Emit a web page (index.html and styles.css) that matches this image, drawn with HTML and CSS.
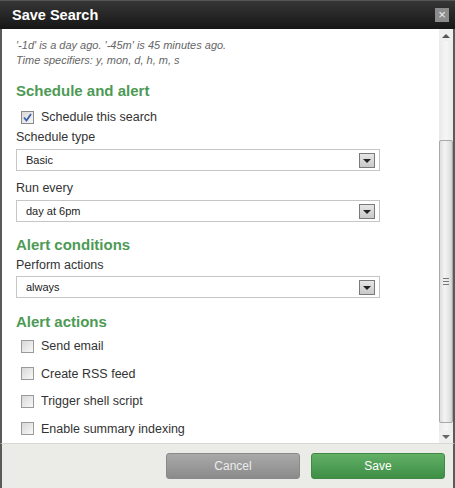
FILE: index.html
```html
<!DOCTYPE html>
<html>
<head>
<meta charset="utf-8">
<link rel="stylesheet" href="styles.css">
</head>
<body>
<div class="dialog">
  <div class="titlebar">
    <span class="title">Save Search</span>
    <span class="close">&#215;</span>
  </div>
  <div class="body">
    <div class="content">
      <p class="help">'-1d' is a day ago. '-45m' is 45 minutes ago.<br>Time specifiers: y, mon, d, h, m, s</p>

      <h2 class="heading h-first">Schedule and alert</h2>
      <label class="check first">
        <span class="box checked"><svg width="9" height="9" viewBox="0 0 9 9"><path d="M1 4.5 L3.5 7.5 L8 1" fill="none" stroke="#3d5fa8" stroke-width="1.8"/></svg></span>
        <span>Schedule this search</span>
      </label>
      <div class="label l-first">Schedule type</div>
      <div class="select"><span>Basic</span><span class="arrow"></span></div>
      <div class="label l-gap">Run every</div>
      <div class="select"><span>day at 6pm</span><span class="arrow"></span></div>

      <h2 class="heading">Alert conditions</h2>
      <div class="label">Perform actions</div>
      <div class="select s-tight"><span>always</span><span class="arrow"></span></div>

      <h2 class="heading h-last">Alert actions</h2>
      <label class="check a-first"><span class="box"></span><span>Send email</span></label>
      <label class="check"><span class="box"></span><span>Create RSS feed</span></label>
      <label class="check"><span class="box"></span><span>Trigger shell script</span></label>
      <label class="check"><span class="box"></span><span>Enable summary indexing</span></label>
    </div>
    <div class="scrollbar">
      <div class="sb-up"></div>
      <div class="sb-track">
        <div class="sb-thumb"><span class="grip"></span></div>
      </div>
      <div class="sb-down"></div>
    </div>
  </div>
  <div class="footer">
    <button class="btn cancel">Cancel</button>
    <button class="btn save">Save</button>
  </div>
</div>
</body>
</html>
```

FILE: styles.css
```css
html, body {
  margin: 0;
  padding: 0;
  background: #ffffff;
}
body {
  font-family: "Liberation Sans", Arial, sans-serif;
  color: #333;
}
.dialog {
  width: 455px;
  height: 488px;
  display: flex;
  flex-direction: column;
  overflow: hidden;
}
.titlebar {
  height: 29px;
  flex: none;
  box-sizing: border-box;
  border-top: 1px solid #555;
  background: linear-gradient(#363636, #161616);
  display: flex;
  align-items: center;
  justify-content: space-between;
  padding: 0 6px 0 12px;
}
.title {
  color: #fff;
  font-weight: bold;
  font-size: 14.5px;
  letter-spacing: 0;
  margin-top: -1px;
}
.close {
  width: 14px;
  height: 14px;
  background: #8c8c8c;
  color: #eee;
  font-size: 13px;
  line-height: 13px;
  text-align: center;
  margin-top: -1px;
}
.body {
  flex: none;
  height: 414px;
  display: flex;
  border-left: 2px solid #5a5a5a;
  border-right: 2px solid #5a5a5a;
  background: #fff;
}
.content {
  flex: 1;
  padding: 9px 0 0 14px;
  overflow: hidden;
}
.help {
  margin: 0;
  font-size: 11px;
  line-height: 15px;
  font-style: italic;
  color: #666;
}
.heading {
  margin: 14px 0 0 0;
  font-size: 15px;
  line-height: 18px;
  font-weight: bold;
  color: #4d9a55;
}
.heading.h-last { margin-top: 15px; }
.check {
  display: flex;
  align-items: center;
  height: 20px;
  margin-top: 7.6px;
  font-size: 12.5px;
  color: #333;
  gap: 7px;
  padding-left: 5px;
}
.check.first { margin-top: 7px; }
.check.a-first { margin-top: 5px; }
.box {
  width: 11px;
  height: 11px;
  border: 1px solid #9a9a9a;
  background: linear-gradient(135deg, #d8d8d8, #f8f8f8);
  display: flex;
  align-items: center;
  justify-content: center;
}
.box.checked {
  border-color: #8a8a8a;
}
.label {
  margin-top: 2px;
  font-size: 12.5px;
  line-height: 18px;
  color: #333;
}
.label.l-first { margin-top: 1px; }
.label.l-gap { margin-top: 8px; }
.select {
  margin-top: 3px;
  width: 364px;
  height: 22px;
  box-sizing: border-box;
  border: 1px solid #c6c6c6;
  display: flex;
  align-items: center;
  justify-content: space-between;
  padding: 0 4px 0 9px;
  font-size: 11px;
  color: #222;
}
.select.s-tight { margin-top: 2px; }
.arrow {
  width: 14px;
  height: 13px;
  border: 1px solid #7a7a7a;
  background: linear-gradient(#e6e6e6, #c9c9c9);
  position: relative;
}
.arrow::after {
  content: "";
  position: absolute;
  left: 3px;
  top: 5px;
  border-left: 4px solid transparent;
  border-right: 4px solid transparent;
  border-top: 4px solid #222;
}
.scrollbar {
  width: 14px;
  flex: none;
  display: flex;
  flex-direction: column;
  background: #efefef;
}
.sb-up, .sb-down {
  height: 12px;
  flex: none;
  position: relative;
}
.sb-up::after, .sb-down::after {
  content: "";
  position: absolute;
  left: 3px;
  border-left: 4px solid transparent;
  border-right: 4px solid transparent;
}
.sb-up::after {
  top: 5px;
  border-bottom: 4px solid #555;
}
.sb-down::after {
  top: 4px;
  border-top: 4px solid #666;
}
.sb-track {
  flex: 1;
  display: flex;
  flex-direction: column;
  justify-content: flex-end;
  padding-bottom: 8px;
  background: linear-gradient(90deg, #e9e9e9, #f6f6f6 50%, #e9e9e9);
}
.sb-thumb {
  height: 283px;
  box-sizing: border-box;
  border: 1px solid #a8a8a8;
  border-radius: 2px;
  background: linear-gradient(90deg, #dedede, #f4f4f4 40%, #e2e2e2 80%, #cfcfcf);
  display: flex;
  align-items: center;
  justify-content: center;
}
.grip {
  width: 6px;
  height: 7px;
  background: repeating-linear-gradient(#777 0 1px, transparent 1px 3px);
}
.footer {
  flex: 1;
  background: #ebebe7;
  border-left: 2px solid #5a5a5a;
  border-right: 2px solid #5a5a5a;
  border-top: 1px solid #d8d8d4;
  display: flex;
  justify-content: flex-end;
  align-items: flex-start;
  gap: 11px;
  padding: 9px 8px 0 0;
}
.btn {
  width: 134px;
  height: 26px;
  border: none;
  border-radius: 3px;
  font-family: "Liberation Sans", Arial, sans-serif;
  font-size: 12px;
  color: #f4f4f4;
  padding: 0;
}
.cancel {
  background: linear-gradient(#a9a9a9, #8b8b8b);
  border: 1px solid #8a8a8a;
  color: #ececec;
}
.save {
  background: linear-gradient(#62b066, #3e8e46);
  border: 1px solid #3f8a45;
  color: #fff;
}
```
